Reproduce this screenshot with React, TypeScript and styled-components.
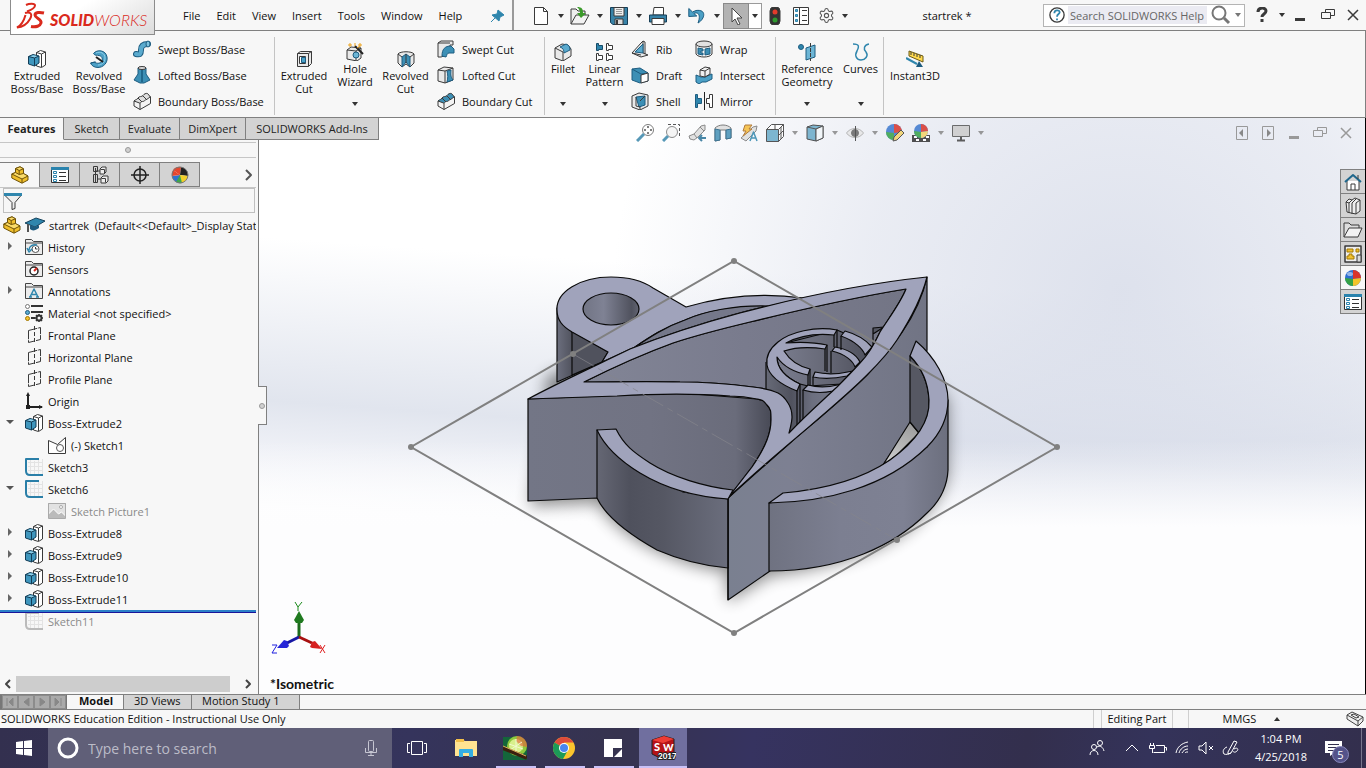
import React from "react";
import styled, { createGlobalStyle, css } from "styled-components";
import { Settings } from "lucide-react";

const UI = '"Open Sans", "Noto Sans", sans-serif';
const INK = "#3a3a3a";
const BLUE = "#2f86ad";
const EDGE = "#808080";

const Global = createGlobalStyle`
  *, *::before, *::after { box-sizing: border-box; }
  body { margin: 0; font-family: ${UI}; font-size: 11px; color: #111; background: #f7f7f7; }
  button, input { font: inherit; color: inherit; }
  button { border: 0; padding: 0; background: none; }
  svg { display: block; flex: none; }
`;

/* ---------- page frame ---------- */
const Page = styled.div`
  display: flex;
  flex-direction: column;
  min-height: 100vh;
  overflow: hidden;
`;
const Center = css`
  display: flex;
  align-items: center;
  justify-content: center;
`;

/* ---------- title bar ---------- */
const TitleBar = styled.header`
  display: flex;
  align-items: stretch;
  height: 31px;
  border-bottom: 1px solid ${EDGE};
  position: relative;
  z-index: 3;
`;
const Brand = styled.div`
  flex: none;
  display: flex;
  align-items: center;
  gap: 4px;
  width: 145px;
  height: 35px;
  margin-left: 10px;
  padding-left: 5px;
  border: 1px solid #8c8c8c;
  border-top: 0;
  background: linear-gradient(150deg, #fff 40%, #dcdcdc);
  color: #da291c;
`;
const BrandName = styled.span`
  padding-top: 6px;
  font: italic 300 16px/20px Lato, ${UI};
  b { font-weight: 900; }
`;
const MenuBar = styled.nav`
  display: flex;
  align-items: center;
  gap: 16px;
  flex: none;
  width: 359px;
  padding: 2px 0 0 28px;
  border-right: 2px solid #9a9a9a;
`;
const MenuItem = styled.button`
  line-height: 16px;
`;
const PinButton = styled.button`
  margin-left: 13px;
`;
const QuickTools = styled.div`
  display: flex;
  align-items: center;
  padding: 1px 0 0 14px;
`;
const QuickButton = styled.button<{ $w?: number; $on?: boolean }>`
  ${Center}
  width: ${(p) => p.$w ?? 26}px;
  height: 26px;
  ${(p) => p.$on && css`background: #b3b3b3; border: 1px solid #8a8a8a;`}
`;
const DropButton = styled.button<{ $w?: number; $boxed?: boolean }>`
  ${Center}
  width: ${(p) => p.$w ?? 13}px;
  height: 26px;
  ${(p) => p.$boxed && css`border: 1px solid #9a9a9a; border-left: 0; background: #fff;`}
`;
const DocName = styled.h1`
  flex: 1;
  margin: 0;
  padding-top: 1px;
  align-self: center;
  font-size: 11px;
  font-weight: 400;
  text-align: center;
`;
const HelpSearch = styled.label`
  display: flex;
  align-items: center;
  align-self: center;
  flex: none;
  width: 202px;
  height: 23px;
  padding-left: 5px;
  border: 1px solid #b4b4b4;
  background: #fff;
`;
const HelpInput = styled.input`
  width: 139px;
  height: 18px;
  margin: 0 4px 0 3px;
  padding: 0 2px;
  border: 0;
  background: #ebebf2;
  &::placeholder { color: #666; opacity: 1; }
`;
const WindowButtons = styled.div`
  display: flex;
  align-items: center;
  flex: none;
`;

/* ---------- ribbon ---------- */
const Ribbon = styled.div`
  display: flex;
  height: 87px;
  padding-left: 6px;
  border-bottom: 1px solid ${EDGE};
  border-right: 1px solid ${EDGE};
`;
const RibbonGroup = styled.section<{ $last?: boolean }>`
  display: flex;
  flex: none;
  margin: 6px 0 2px;
  border-right: ${(p) => (p.$last ? "0" : "1px solid #c4c4c4")};
`;
const BigButton = styled.button<{ $w: number; $drop?: boolean }>`
  display: flex;
  flex-direction: column;
  align-items: center;
  gap: 1px;
  width: ${(p) => p.$w}px;
  padding-top: ${(p) => (p.$drop ? 6 : 13)}px;
  line-height: 13px;
  position: relative;
`;
const BigCaret = styled.span`
  position: absolute;
  bottom: 9px;
`;
const SmallList = styled.div<{ $w: number }>`
  display: flex;
  flex-direction: column;
  width: ${(p) => p.$w}px;
  margin-top: -1px;
  padding-left: 3px;
`;
const SmallButton = styled.button`
  display: flex;
  align-items: center;
  gap: 7px;
  height: 26px;
  white-space: nowrap;
`;

/* ---------- workspace ---------- */
const Workspace = styled.main`
  display: flex;
  flex: 1;
  min-height: 0;
  border-right: 1px solid #000;
`;
const Side = styled.aside`
  display: flex;
  flex-direction: column;
  flex: none;
  width: 259px;
  position: relative;
  z-index: 2;
`;
const CommandTabs = styled.div`
  display: flex;
  width: max-content;
  height: 22px;
`;
const CommandTab = styled.button<{ $on?: boolean; $w: number }>`
  width: ${(p) => p.$w}px;
  line-height: 16px;
  color: #222;
  background: ${(p) => (p.$on ? "#f7f7f7" : "#d3d3d3")};
  font-weight: ${(p) => (p.$on ? 700 : 400)};
  border-right: 1px solid ${EDGE};
  border-bottom: 1px solid ${(p) => (p.$on ? "#f7f7f7" : EDGE)};
`;
const Panel = styled.div`
  display: flex;
  flex-direction: column;
  flex: 1;
  background: #f7f7f7;
  border-right: 1px solid ${EDGE};
  position: relative;
`;
const Grip = styled.div`
  ${Center}
  height: 16px;
  margin: 2px 2px 4px 0;
  border: solid #c6c6c6;
  border-width: 1px 0;
`;
const Dot = styled.span`
  width: 6px;
  height: 6px;
  border: 1px solid #999;
  border-radius: 50%;
  background: #d0d0d0;
`;
const SplitHandle = styled.button`
  ${Center}
  position: absolute;
  left: 258px;
  top: 246px;
  width: 9px;
  height: 39px;
  border: 1px solid ${EDGE};
  border-left: 0;
  background: #f7f7f7;
`;
const ManagerTabs = styled.div`
  display: flex;
  height: 26px;
  margin-right: 2px;
  border-bottom: 1px solid #c6c6c6;
`;
const ManagerTab = styled.button<{ $on?: boolean }>`
  ${Center}
  width: 40px;
  border: solid ${EDGE};
  border-width: 1px 1px ${(p) => (p.$on ? 0 : 1)}px 0;
  background: ${(p) => (p.$on ? "#f7f7f7" : "#d3d3d3")};
`;
const MoreButton = styled.button`
  ${Center}
  width: 16px;
  margin-left: auto;
`;
const FilterBox = styled.label`
  display: flex;
  align-items: center;
  height: 25px;
  margin: 0 3px 1px;
  border: 1px solid #c0c0c0;
`;
const FilterInput = styled.input`
  flex: 1;
  min-width: 0;
  border: 0;
  background: none;
`;
const Tree = styled.ul`
  flex: 1;
  margin: 0;
  padding: 0;
  list-style: none;
`;
const TreeRow = styled.li<{ $sub?: boolean; $root?: boolean; $dim?: boolean }>`
  display: flex;
  align-items: center;
  gap: ${(p) => (p.$root ? 4 : 5)}px;
  height: 22px;
  margin-right: 2px;
  padding-left: ${(p) => (p.$sub ? 48 : 3)}px;
  white-space: nowrap;
  overflow: hidden;
  color: ${(p) => (p.$dim ? "#8a8a8a" : "#111")};
`;
const Toggle = styled.button`
  display: flex;
  align-items: center;
  padding: 0 0 2px 3px;
  width: 17px;
  height: 16px;
`;
const Indent = styled.span`
  width: 17px;
`;
const Rollback = styled.hr`
  height: 3px;
  margin: 0 2px -3px 0;
  border: 0;
  border-bottom: 1px solid #1a149a;
  background: #2c80c8;
  position: relative;
`;
const ScrollBar = styled.div`
  display: flex;
  height: 16px;
  margin: 0 2px 2px 0;
`;
const ScrollArrow = styled.button`
  ${Center}
  width: 16px;
`;
const ScrollThumb = styled.div`
  flex: 1;
  background: #cdcdcd;
  margin-right: 10px;
`;

/* ---------- viewport ---------- */
const Viewport = styled.section`
  flex: 1;
  min-width: 0;
  position: relative;
  background:
    linear-gradient(180deg, rgba(255, 255, 255, 0) 56%, #fdfdfe 71%),
    radial-gradient(ellipse 46% 80% at 78% 30%, rgba(213, 218, 232, 0.8), rgba(213, 218, 232, 0.5) 50%, rgba(213, 218, 232, 0) 100%),
    linear-gradient(184deg, #fff 30%, #e1e5ee 55%, #eef0f6 62%, #fff 72%);
`;
const Scene = styled.svg`
  position: absolute;
  inset: 0;
  width: 100%;
  height: 100%;
`;
const ViewBar = styled.div`
  display: grid;
  grid-template-columns: 1fr auto 1fr;
  align-items: center;
  height: 30px;
  position: relative;
`;
const ViewTools = styled.div`
  grid-column: 2;
  display: flex;
  padding-right: 4px;
  opacity: 0.85;
`;
const ViewTool = styled.button<{ $w?: number }>`
  ${Center}
  width: ${(p) => p.$w ?? 26}px;
  height: 22px;
`;
const DocButtons = styled.div`
  display: flex;
  justify-content: flex-end;
  padding-right: 6px;
`;
const TaskPane = styled.nav`
  position: absolute;
  right: 0;
  top: 51px;
  display: flex;
  flex-direction: column;
  border: solid ${EDGE};
  border-width: 1px 0 0 1px;
`;
const TaskButton = styled.button<{ $on?: boolean }>`
  ${Center}
  width: 24px;
  height: 24px;
  background: ${(p) => (p.$on ? "#f7f7f7" : "#d3d3d3")};
  border-bottom: 1px solid ${EDGE};
`;
const ViewName = styled.div`
  position: absolute;
  left: 11px;
  bottom: 2px;
  font: 700 14px/16px Lato, ${UI};
`;

/* ---------- bottom bars ---------- */
const DocTabs = styled.div`
  display: flex;
  height: 16px;
  border: solid ${EDGE};
  border-width: 1px 0;
`;
const StepButton = styled.button`
  ${Center}
  width: 16px;
  background: #aaa;
  border: 1px solid #8c8c8c;
`;
const Steps = styled.div`
  display: flex;
  width: 67px;
  padding: 0 1px 0 2px;
  background: #777;
`;
const DocTab = styled.button<{ $on?: boolean; $w: number }>`
  display: flex;
  align-items: center;
  width: ${(p) => p.$w}px;
  padding: 0 0 2px ${(p) => (p.$on ? 12 : 10)}px;
  line-height: 12px;
  background: ${(p) => (p.$on ? "#f7f7f7" : "#d3d3d3")};
  font-weight: ${(p) => (p.$on ? 700 : 400)};
  border-right: 1px solid ${EDGE};
`;
const StatusBar = styled.footer`
  display: flex;
  align-items: stretch;
  height: 18px;
  line-height: 18px;
  padding-left: 1px;
`;
const StatusText = styled.span`
  flex: 1;
`;
const StatusCell = styled.span<{ $w: number }>`
  ${Center}
  gap: 18px;
  width: ${(p) => p.$w}px;
  border-left: 1px solid #cfcfcf;
`;
const StatusIcon = styled.span`
  display: flex;
  align-items: center;
  justify-content: flex-end;
  width: 52px;
  padding-right: 2px;
`;

/* ---------- taskbar ---------- */
const Taskbar = styled.footer`
  display: flex;
  height: 40px;
  background: linear-gradient(100deg, #33304f 0, #35345c 30%, #36334f 45%, #363360 55%, #332f4d 75%, #34335a 84%, #332f4d 100%);
  color: #fff;
`;
const StartButton = styled.button`
  ${Center}
  width: 48px;
`;
const TaskSearch = styled.label`
  display: flex;
  align-items: center;
  width: 344px;
  padding: 0 14px 0 8px;
  background: #605f78;
`;
const TaskInput = styled.input`
  flex: 1;
  min-width: 0;
  margin-left: 8px;
  padding: 0;
  border: 0;
  background: none;
  font-size: 14px;
  &::placeholder { color: #bcbcc8; opacity: 1; }
`;
const AppButton = styled.button<{ $run?: boolean; $on?: boolean }>`
  ${Center}
  width: ${(p) => (p.$on ? 48 : 49)}px;
  margin-left: ${(p) => (p.$on ? 2 : 0)}px;
  position: relative;
  background: ${(p) => (p.$on ? "#706f9f" : "none")};
  &::after {
    content: "";
    display: ${(p) => (p.$run || p.$on ? "block" : "none")};
    position: absolute;
    left: ${(p) => (p.$on ? 0 : 6)}px;
    right: ${(p) => (p.$on ? 0 : 3)}px;
    bottom: 0;
    height: 2px;
    background: #c9c1f7;
  }
`;
const Tray = styled.div`
  display: flex;
  margin-left: auto;
`;
const TrayButton = styled.button<{ $w: number }>`
  ${Center}
  width: ${(p) => p.$w}px;
  position: relative;
`;
const Clock = styled.time`
  ${Center}
  flex-direction: column;
  width: 70px;
  line-height: 18px;
`;
const NoticeButton = styled.button`
  display: flex;
  align-items: center;
  width: 45px;
  padding-left: 9px;
  position: relative;
`;
const Badge = styled.span`
  ${Center}
  position: absolute;
  left: 16px;
  top: 18px;
  width: 17px;
  height: 17px;
  border: 1px solid #8a89bd;
  border-radius: 50%;
  background: #54538a;
  font-size: 11px;
`;
const ShowDesktop = styled.button`
  width: 5px;
  border-left: 1px solid #77768c;
`;

/* ---------- icon drawings ---------- */
const Art = ({ s = 18, v, children }: { s?: number; v?: string; children: React.ReactNode }) => (
  <svg width={s} height={s} viewBox={v ?? "0 0 18 18"} fill="none" stroke={INK} strokeLinejoin="round" aria-hidden="true">
    {children}
  </svg>
);
const Caret = ({ c = "#333" }: { c?: string }) => (
  <svg width="6" height="4" viewBox="0 0 6 4" aria-hidden="true"><path d="M0 0h6L3 4z" fill={c} /></svg>
);
const Gray = "#e9e9e9";
const Cube = ({ x, y, w, h, d, f, t, r }: { x: number; y: number; w: number; h: number; d: number; f: string; t: string; r: string }) => (
  <>
    <path d={`M${x} ${y}h${w}v${h}h${-w}z`} fill={f} />
    <path d={`M${x} ${y}l${d} ${-d}h${w}l${-d} ${d}z`} fill={t} />
    <path d={`M${x + w} ${y}l${d} ${-d}v${h}l${-d} ${d}z`} fill={r} />
  </>
);
const Extrude = () => (
  <Art>
    <path d="M8.500 2.500l4-2 5 1.500v13l-4 2.500-5-1.500z" fill="#fff" />
    <path d="M13.500 4l4-2M13.500 4v13M8.500 2.500l5 1.500" />
    <path d="M.5 6.500l4.500-2 6 1.500v7l-4.500 3-6-2z" fill="#3f96bd" stroke="#123d57" />
    <path d="M1.500 6.500l4-1.300 4.500 1-3.500 1.600z" fill="#8fd0ea" stroke="none" />
    <path d="M.5 6.500l6 1.500 4.500-2M6.500 8v8" stroke="#123d57" />
  </Art>
);
const Revolve = () => (
  <Art>
    <path d="M3.500 3.500C7-1 16 0 17 7c1 6-4 10.500-9 10.500-4 0-6.500-2-7.500-4.500l4-1c2 2 6 1.500 7.500-1 1-3-.5-5-3-5.500-2-.5-4 .5-5.500-2z" fill="#4ba0c6" stroke="#1d5c80" />
    <path d="M6 3c4-2 9 0 9 5s-4 7-7 7" stroke="#8fd0ea" />
    <path d="M6 7l7 5" strokeWidth="2" stroke="#222" />
    <path d="M1 13l5-1" stroke="#1d5c80" />
  </Art>
);
const Sweep = () => (
  <Art>
    <path d="M3 14c4 1 5 0 5-4 0-4 2-6 7-6" strokeWidth="6" stroke="#1d5c80" strokeLinecap="round" />
    <path d="M3 14c4 1 5 0 5-4 0-4 2-6 7-6" strokeWidth="4" stroke="#5aaace" strokeLinecap="round" />
    <ellipse cx="15" cy="4" rx="2" ry="3" fill="#7cc3e0" stroke="#1d5c80" />
  </Art>
);
const Loft = () => (
  <Art>
    <path d="M5 2v6l-4 6 6 3h4l6-3-4-6V2z" fill="#3c8fb5" stroke="#1d5c80" />
    <path d="M9 4v12" stroke="#1f678c" strokeWidth="2" />
    <ellipse cx="9" cy="2" rx="4" ry="1.500" fill="#ddd" />
  </Art>
);
const Boundary = ({ top = "#dedede" }: { top?: string }) => (
  <Art>
    <path d="M1 9v5l6 3.500 10.500-6V5z" fill="#f4f4f4" />
    <path d="M1 9c2-2 3-1 4-3s4-1 5-2.500S13 1 14.500 1.500l3 3.500c-2 0-2 2-4 2.500s-2 2-4 2-2 2-3 1.500z" fill={top} />
    <path d="M7 11v6.500M5 6l4 4M10 4l4 4" />
  </Art>
);
const CutBox = () => (
  <Art>
    <path d="M2.500 3.500l3-2h11v12l-3 3h-11z" fill={Gray} />
    <path d="M2.500 3.500h11v13M13.500 3.500l3-2" />
    <path d="M4.500 6.500h6v7h-6z" fill="#fff" /><path d="M6.500 7.500h4v5h-4z" fill="#4ba0c6" stroke="#1d5c80" />
  </Art>
);
const Hole = () => (
  <Art>
    <path d="M1 7l4-3 10 1v10l-4 3-10-2z" fill={Gray} />
    <path d="M1 7l9 1v10M10 8l5-3" />
    <circle cx="10" cy="12" r="3" fill="#6db6d6" stroke="#1d5c80" />
    <path d="M9 3l8 8" stroke="#222" strokeWidth="2" />
    <path d="M4 0v4M2 2h4M9 0v3M14 0v4M12 2h4M11 5l3-2" stroke="#eda31c" />
  </Art>
);
const RevCut = () => (
  <Art>
    <path d="M1 4c2-3 14-3 16 0v9l-4 4-4-3-4 3-4-4z" fill={Gray} />
    <path d="M9 4l-4 3v10l4-5 4 5V7z" fill="#3c8fb5" stroke="#1d5c80" /><path d="M9 4v9M1 4l4 3M17 4l-4 3" />
  </Art>
);
const SweptCut = () => (
  <Art>
    <path d="M1 3l3-2h12v4h-3v2c-5 0-6 4-6 9l-3 1H1z" fill={Gray} />
    <path d="M5 16c0-7 3-10 9-10l3 3v4h-5c-2 0-2 2-3 4z" fill="#3c8fb5" stroke="#1d5c80" /><path d="M1 3h12" />
  </Art>
);
const LoftCut = () => (
  <Art>
    <path d="M1 4l6-3 9 1v12l-8 3-7-2z" fill={Gray} />
    <path d="M1 4l7 1v12M8 5l8-3" /><path d="M10 5l4-1c0 4-1 6 2 10l-6 2c1-4 1-7 0-11z" fill="#3c8fb5" stroke="#1d5c80" />
  </Art>
);
const Fillet = () => (
  <Art>
    <path d="M1 5l7-4 6 1 3 4v7l-8 5-8-3z" fill={Gray} />
    <path d="M6 4l6-3c3 1 4 3 4 6l-6 3c0-3-1-5-4-6z" fill="#5aaace" stroke="#1d5c80" /><path d="M1 5l8 4v9" />
  </Art>
);
const Linear = () => (
  <Art>
    {[[0.5, 0.5], [10.5, 0.5], [0.5, 10.5], [10.5, 10.5]].map(([x, y], i) => (
      <path key={i} d={`M${x} ${y}h2v2h4v4h-4v1h-2z`} fill={i ? "#fff" : BLUE} stroke={i ? INK : "#164b68"} />
    ))}
  </Art>
);
const Rib = () => (
  <Art>
    <path d="M1 13l9-10 2-2v12l5 2-7 2z" fill={Gray} /><path d="M4 12l8-8v9z" fill="#5aaace" stroke="#1d5c80" /><path d="M12 1l2 1v12M1 13l9 2" />
  </Art>
);
const Draft = () => (
  <Art>
    <path d="M1 3l8-1 8 5v8l-8 2-8-3z" fill="#3c8fb5" stroke="#1d5c80" /><path d="M1 3l9 5 7-1" stroke="#1d5c80" /><path d="M10 9l7-2v8l-7 2z" fill="#fff" />
  </Art>
);
const Shell = () => (
  <Art>
    <path d="M1 4l7-3 9 2v11l-8 4-8-3z" fill={Gray} /><path d="M5 5l9-1v9l-6 2z" fill="#3c8fb5" stroke="#1d5c80" /><path d="M5 5v9l4 1v3M9 9l5-5" />
  </Art>
);
const Wrap = () => (
  <Art>
    <path d="M1 4v10c2 4 14 4 16 0V4" fill="#f4f4f4" /><ellipse cx="9" cy="4" rx="8" ry="3" fill="#e2e2e2" />
    <path d="M3 8l5 1v2H6v2h2v2l-5-1zM10 9l5-1v6l-5 1z" fill="#3c8fb5" stroke="#1d5c80" />
  </Art>
);
const Intersect = () => (
  <Art>
    <path d="M1 9l5 2h4l7-3v5l-6 3H7l-3 2-3-2z" fill="#4ba0c6" stroke="#1d5c80" />
    <path d="M5 4l5-3 5 1v6l-5 3-5-1z" fill="#f0f0f0" /><path d="M5 4l5 1v6M10 5l5-3" />
  </Art>
);
const Mirror = () => (
  <Art>
    <path d="M.5 2.500h2v4h4v5h-4v4h-2z" fill={BLUE} stroke="#1d5c80" /><path d="M17.500 2.500h-3v4h-3v5h3v4h3z" fill="#fff" /><path d="M9.500 0v18" stroke="#222" />
  </Art>
);
const RefGeo = () => (
  <Art>
    <circle cx="3" cy="4" r="2.500" fill={BLUE} stroke="#1d5c80" /><path d="M8 5l9-3v12l-9 3z" fill="#6db6d6" stroke="#1d5c80" /><path d="M12.500 0v18" strokeDasharray="4 1" />
  </Art>
);
const Curves = () => (
  <Art><path d="M1 1c7 0 6 3 4 7-3 5 0 9 4 9s8-4 5-8c-3-3-2-7 3-8" stroke={BLUE} strokeWidth="1.500" /></Art>
);
const Instant = () => (
  <Art>
    <path d="M3 1l14 5v6L3 6z" fill="#ffd94d" stroke="#6b5a15" /><path d="M5 2v3M8 3v3M11 4v3M14 5v3" />
    <path d="M0 8l11 6" stroke={BLUE} strokeWidth="2" /><path d="M17 17l-7 0 3-6z" fill="#1d5c80" stroke="none" />
  </Art>
);
const Part = () => (
  <Art>
    <path d="M.8 8l3.700-1.500V2.500L9 .8l3.500 2v5L17 10v4l-6 3.200L.8 12z" fill="#f0bf2c" stroke="#6e5208" />
    <path d="M4.500 2.500L9 .8l3.500 2-4.300 1.700zM.8 8l3.700-1.500 3.700 2 4.300-1L17 10l-6 3z" fill="#fbdc6a" stroke="#6e5208" />
    <path d="M8.200 4.500v4M11 13v4" stroke="#6e5208" />
  </Art>
);
const PropList = () => (
  <Art>
    <path d="M.5 1.500h17v15H.5z" fill="#fff" stroke="#333" /><path d="M0 2.500h18" stroke="#2a83ad" strokeWidth="3" />
    {[6, 10, 14].map((y) => <g key={y}><path d={`M2.500 ${y - 0.5}h3v2h-3z`} stroke="#2a83ad" /><path d={`M8 ${y + 0.5}h7`} stroke="#333" /></g>)}
  </Art>
);
const Config = () => (
  <Art>
    <path d="M2.500.5h4v5h-4zM2.500 8.500h4v8h-4z" /><path d="M4.500 2v14M5 5h4M6 13h5" />
    <path d="M9 3l2-2h4v5l-2 2H9zM10 12l2-2h5v5l-2 2h-5z" fill="#eee" /><path d="M10.500 12.500h4v4M9.500 3.500h4v4" />
  </Art>
);
const Target = () => (
  <Art><circle cx="9" cy="9" r="6" strokeWidth="1.500" stroke="#222" /><path d="M9 0v18M0 9h18" strokeWidth="1.500" stroke="#222" /></Art>
);
const Ball = ({ s = 18 }: { s?: number }) => (
  <Art s={s}>
    <circle cx="9" cy="9" r="8" fill="#2f6fd0" stroke="none" />
    <path d="M9 1a8 8 0 0 1 8 8L9 10z" fill="#d9342b" stroke="none" />
    <path d="M17 9a8 8 0 0 1-8 8l0-7z" fill="#f3c42a" stroke="none" />
    <path d="M9 17a8 8 0 0 1-8-8l8 1z" fill="#35a246" stroke="none" />
    <ellipse cx="6" cy="5" rx="3" ry="2" fill="#fff" opacity=".5" stroke="none" />
  </Art>
);
const Ball2 = () => (
  <Art>
    <circle cx="9" cy="9" r="8" fill="#fff" stroke="none" />
    <path d="M9 9L2 4a8 8 0 0 1 8-3z" fill="#e6462e" stroke="none" /><path d="M9 9l1-8a8 8 0 0 1 7 9z" fill="#222" stroke="none" />
    <path d="M9 9l8 1a8 8 0 0 1-8 7z" fill="#f2cf2b" stroke="none" /><path d="M9 9v8a8 8 0 0 1-8-7z" fill="#3173cf" stroke="none" />
    <path d="M9 9l-8 1a8 8 0 0 1 1-6z" fill="#e6462e" stroke="none" /><path d="M9 9l2 8a8 8 0 0 1-6-1z" fill="#3fa54c" stroke="none" />
    <circle cx="9" cy="9" r="8" stroke="#777" />
  </Art>
);
const Funnel = () => (
  <Art><path d="M1 3.500h16l-6 7v6l-3 1v-7z" fill="#eee" /><path d="M0 2.500h18" stroke={BLUE} strokeWidth="3" /></Art>
);
const Cap = () => (
  <svg width="20" height="18" viewBox="0 0 20 18" aria-hidden="true">
    <path d="M0 7l11-5 9 3-10 6z" fill={BLUE} stroke="#17435c" /><path d="M5 9v4c2 2 5 2 9-1V9l-4 2z" fill="#1d5c80" /><path d="M2 8v8h2V8z" fill="#555" />
  </svg>
);
const Folder = ({ children }: { children?: React.ReactNode }) => (
  <Art><path d="M.5 1.500h6l2 2h9v13H.5z" fill="#ececec" stroke="#444" /><path d="M0 5h18" stroke="#444" />{children}</Art>
);
const Plane = () => (
  <Art><path d="M3.500 4.500l12-3v12l-12 3z" strokeDasharray="9 1" /><path d="M9.500 0v18" strokeDasharray="4 2" /></Art>
);
const SketchIcon = ({ dim }: { dim?: boolean }) => (
  <Art>
    <path d="M5.500 1v15M9.500 3v13M13.500 1v15M17.500 1v15M3 4.500h15M3 8.500h15M3 12.500h15" stroke="#e3e3e3" />
    <path d="M14 1H1v12q0 4 4 4h13" stroke={dim ? "#bbb" : "#2a7fa8"} strokeWidth="2" />
  </Art>
);
const treeIcons: Record<string, React.ReactNode> = {
  history: <Folder><circle cx="10.500" cy="11" r="3.500" stroke="#555" fill="#fff" /><path d="M10.500 9v2h2" /><path d="M4 12c0-4 4-6 8-5M2 10l2 4 3-3" stroke={BLUE} strokeWidth="1.500" /></Folder>,
  sensors: <Folder><circle cx="9" cy="11" r="4" fill="#fff" stroke="#222" strokeWidth="1.500" /><path d="M9 11l3-3" stroke="#d5281f" strokeWidth="2" /></Folder>,
  notes: <Folder><path d="M5 15L9 7l4 8M6.500 12.500h5M4 15h3M11 15h3" stroke={BLUE} strokeWidth="1.500" /></Folder>,
  material: (
    <Art>
      <path d="M6 2h12M6 8h12M6 14h4" stroke="#333" strokeWidth="2" />
      <circle cx="2.500" cy="2.500" r="2" fill="#fff" stroke="#777" /><circle cx="2.500" cy="8.500" r="2" fill="#5aaace" stroke="#1d5c80" /><circle cx="2.500" cy="14.500" r="2" fill="#f2c230" stroke="#a37800" />
      <circle cx="14" cy="14" r="2.500" stroke="#333" strokeWidth="2" /><path d="M14 10v2M14 16v2M10 14h2M16 14h2M11 11l1 1M17 17l-1-1M17 11l-1 1M11 17l1-1" stroke="#333" strokeWidth="1.500" />
    </Art>
  ),
  plane: <Plane />,
  origin: <Art><path d="M3 2v13h14" stroke="#222" strokeWidth="2" /><path d="M3 0l2 4H1zM18 15l-4-2v4zM1 13h4v4H1z" fill="#222" stroke="none" /></Art>,
  boss: <Extrude />,
  sketchEdit: <Art><path d="M.5 4.500v13h17V1.500l-8 7z" fill="#fff" /><circle cx="12" cy="12" r="3.500" fill="#fff" stroke="#555" /></Art>,
  sketch: <SketchIcon />,
  sketchDim: <SketchIcon dim />,
  picture: <Art><path d="M.5 1.500h17v15H.5z" fill="#e2e2e2" stroke="#aaa" /><path d="M.5 12l5-5 5 5 3-2 4 4v2.500H.5z" fill="#bbb" stroke="#fff" /><path d="M.5 1.500h17v15H.5z" stroke="#aaa" /><circle cx="13" cy="5" r="1.500" fill="#fff" stroke="#aaa" /></Art>,
};

/* ---------- data ---------- */
type Row = { label: string; icon: string; sub?: boolean; dim?: boolean; open?: boolean; has?: boolean };
const rows: Row[] = [
  { label: "History", icon: "history", has: true },
  { label: "Sensors", icon: "sensors" },
  { label: "Annotations", icon: "notes", has: true },
  { label: "Material <not specified>", icon: "material" },
  { label: "Frontal Plane", icon: "plane" },
  { label: "Horizontal Plane", icon: "plane" },
  { label: "Profile Plane", icon: "plane" },
  { label: "Origin", icon: "origin" },
  { label: "Boss-Extrude2", icon: "boss", has: true, open: true },
  { label: "(-) Sketch1", icon: "sketchEdit", sub: true },
  { label: "Sketch3", icon: "sketch" },
  { label: "Sketch6", icon: "sketch", has: true, open: true },
  { label: "Sketch Picture1", icon: "picture", sub: true, dim: true },
  { label: "Boss-Extrude8", icon: "boss", has: true },
  { label: "Boss-Extrude9", icon: "boss", has: true },
  { label: "Boss-Extrude10", icon: "boss", has: true },
  { label: "Boss-Extrude11", icon: "boss", has: true },
];

const Big = ({ w, icon, a, b, drop }: { w: number; icon: React.ReactNode; a: string; b?: string; drop?: boolean }) => (
  <BigButton $w={w} $drop={drop}>
    {icon}
    <span>{a}{b && <><br />{b}</>}</span>
    {drop && <BigCaret><Caret /></BigCaret>}
  </BigButton>
);
const Smalls = ({ w, items }: { w: number; items: [React.ReactNode, string][] }) => (
  <SmallList $w={w}>
    {items.map(([icon, name]) => <SmallButton key={name}>{icon}{name}</SmallButton>)}
  </SmallList>
);

const deltaOuter =
  "M528 399C560 382 595 366 630 349C668 334 703 323 740 313C800 297 860 284 927 277C922 297 910 320 897 340C888 354 878 364 867 375C845 397 818 419 790 443C770 460 748 479 728 498C738 485 745 476 752 467C760 455 764 448 767 440C770 432 771 426 771 420C771 411 771 409 767 405C763 400 762 400 757 399C748 397 740 396 730 396C690 393 650 394 617 396C587 397 557 398 528 399Z";
const deltaInner =
  "M584 382C610 369 640 355 673 343C697 335 725 328 750 322C795 311 850 298 906 289C901 302 889 318 880 332C874 345 868 355 860 363C850 374 844 380 837 387C822 401 806 415 789 433C791 425 792 422 792 417C792 411 790 406 788 403C785 398 782 395 778 393C770 389 762 388 753 387C730 384 704 382 680 382C650 381 610 382 584 382Z";
const TOP = "#a0a3bb";

const Model = () => (
  <Scene viewBox="259 118 1106 576" preserveAspectRatio="xMidYMid meet" role="img" aria-label="startrek part, isometric view">
    <defs>
      <filter id="soft" x="-20%" y="-20%" width="140%" height="140%"><feGaussianBlur stdDeviation="8" /></filter>
      <linearGradient id="frontWall" gradientUnits="userSpaceOnUse" x1="528" y1="0" x2="772" y2="0">
        <stop offset="0" stopColor="#737686" /><stop offset=".5" stopColor="#717383" /><stop offset=".85" stopColor="#6a6c7b" /><stop offset="1" stopColor="#474955" />
      </linearGradient>
      <linearGradient id="crescent" gradientUnits="userSpaceOnUse" x1="597" y1="0" x2="728" y2="0">
        <stop offset="0" stopColor="#656774" /><stop offset=".25" stopColor="#4f515d" /><stop offset=".5" stopColor="#555763" /><stop offset="1" stopColor="#6b6e7d" />
      </linearGradient>
      <linearGradient id="ringWall" gradientUnits="userSpaceOnUse" x1="769" y1="0" x2="948" y2="0">
        <stop offset="0" stopColor="#6f7281" /><stop offset=".4" stopColor="#7c7f91" /><stop offset=".75" stopColor="#7e8193" /><stop offset="1" stopColor="#6c6f7e" />
      </linearGradient>
      <linearGradient id="face" gradientUnits="userSpaceOnUse" x1="728" y1="0" x2="927" y2="0">
        <stop offset="0" stopColor="#7a8090" /><stop offset=".3" stopColor="#7d8092" /><stop offset="1" stopColor="#717484" />
      </linearGradient>
      <linearGradient id="backWall" gradientUnits="userSpaceOnUse" x1="584" y1="0" x2="906" y2="0">
        <stop offset="0" stopColor="#828596" /><stop offset=".5" stopColor="#797b8d" /><stop offset="1" stopColor="#737585" />
      </linearGradient>
      <linearGradient id="bore" gradientUnits="userSpaceOnUse" x1="584" y1="0" x2="640" y2="0">
        <stop offset="0" stopColor="#727585" /><stop offset=".35" stopColor="#7f8294" /><stop offset=".85" stopColor="#50525e" /><stop offset="1" stopColor="#666876" />
      </linearGradient>
      <linearGradient id="eyelet" gradientUnits="userSpaceOnUse" x1="557" y1="0" x2="573" y2="0">
        <stop offset="0" stopColor="#6c6f7e" /><stop offset="1" stopColor="#4f515c" />
      </linearGradient>
      <linearGradient id="boss" gradientUnits="userSpaceOnUse" x1="766" y1="0" x2="850" y2="0">
        <stop offset="0" stopColor="#676a77" /><stop offset=".3" stopColor="#50525e" /><stop offset=".55" stopColor="#6c6f7f" /><stop offset="1" stopColor="#7c7f90" />
      </linearGradient>
      <linearGradient id="cell" gradientUnits="userSpaceOnUse" x1="784" y1="0" x2="870" y2="0">
        <stop offset="0" stopColor="#777a8b" /><stop offset=".5" stopColor="#666876" /><stop offset="1" stopColor="#4e505c" />
      </linearGradient>
      <linearGradient id="ground" gradientUnits="userSpaceOnUse" x1="910" y1="422" x2="890" y2="465">
        <stop offset="0" stopColor="#9b9b9b" /><stop offset="1" stopColor="#cfcfcf" />
      </linearGradient>
      <clipPath id="pocket"><path d={deltaInner} /></clipPath>
    </defs>
    <path d="M546 400V376L600 360L900 350L948 400V475C935 520 890 560 770 576L728 602L726 572C680 566 620 540 597 503L530 506Z" fill="#000" opacity=".45" filter="url(#soft)" />

    <g stroke="#0a0a0a" strokeWidth="1.200" strokeLinejoin="round">
      <path d="M557 308V382L573 375L602 362L608 352L572 332Z" fill="url(#eyelet)" />
      <path d="M572 331V375L602 362L608 352Z" fill="#50525d" />
      <path d="M557 310C556 292 580 277 611 277C630 277 643 281 653 288L686 307C720 297 760 292 803 298L765 307C735 306 705 311 685 320C665 327 650 337 635 347L602 362L608 352L572 332C562 326 557 320 557 310Z" fill={TOP} />
      <path d="M635 347C650 337 665 327 685 320C705 311 735 305 768 306C720 317 680 330 635 347Z" fill="#75788a" />
      <ellipse cx="611" cy="309" rx="28" ry="16" fill="url(#bore)" />

      <path d="M528 399V501L597 498L728 560V498C738 485 745 476 752 467C760 455 764 448 767 440C770 432 771 426 771 420C771 411 771 409 767 405C763 400 762 400 757 399L680 393Z" fill="url(#frontWall)" />
      <path d={deltaInner} fill="url(#backWall)" />
      <g clipPath="url(#pocket)">
        <path d="M766 360V395L790 440L840 400L880 350L860 335L820 328L778 342Z" fill="url(#boss)" stroke="none" />
        <path d="M766 362V395" />
        <path d="M777 357C780 350 784 347 786 343L837 330L860 340L872 347L865 362L842 384L808 386L800 384C787 378 777 370 777 357Z" fill="url(#cell)" />
        <path d="M837 330C815 326 790 332 778 342C768 350 766 358 767 365C769 377 782 385 797 391L800 384C787 378 777 370 777 357C783 366 793 372 808 375L810 369C797 366 789 359 784 351C799 346 812 347 825 349L827 345C813 342 800 342 786 343C799 336 815 333 834 335Z" fill={TOP} />
        <path d="M845 331L841 336C855 341 863 349 865 355L872 347C866 340 856 334 845 331Z" fill={TOP} />
        <path d="M835 347L832 351C845 354 853 361 855 367L860 362C856 354 847 349 835 347Z" fill={TOP} />
        <path d="M815 372L813 377C826 380 838 378 847 376L853 371C840 374 827 375 815 372Z" fill={TOP} />
        <path d="M808 385L803 390C813 393 824 393 833 391L842 384C831 387 819 388 808 385Z" fill={TOP} />
        <path d="M797 391V430M800 384V426M803 390V423M808 375V385M810 369V386M813 377V385M825 349V371M827 345V372M831 351V373M834 335V347M837 330V347M841 336V350" fill="none" />
        <path d="M873 350V328L884 327L873 334" fill="#555763" />
      </g>

      <path d="M927 277V350L910 424L883 465L880 500L770 503V571L728 600V498L790 443C818 419 845 397 867 375C890 350 918 318 927 277Z" fill="url(#face)" />
      <path d={deltaOuter + deltaInner} fillRule="evenodd" fill={TOP} />

      <path d="M597 430V498C605 515 625 532 657 550C680 560 705 566 728 568V499L683 492Z" fill="url(#crescent)" />
      <path d="M597 430C604 445 617 459 640 473C668 490 698 497 728 499L733 490C705 487 672 477 650 463C633 452 624 445 616 429Z" fill={TOP} />
      <path d="M728 499V600" />

      <path d="M910 422L883 465L897 455L919 433Z" fill="url(#ground)" />
      <path d="M910 356V422L919 433C927 422 930 410 929 400C928 380 920 366 910 356Z" fill="#565863" />
      <path d="M948 400V470C947 490 938 503 927 513C895 545 842 571 769 571V503L857 488L927 447Z" fill="url(#ringWall)" />
      <path d="M916 341C935 357 948 380 948 400C948 418 940 434 927 447C885 488 825 502 769 503L783 493C830 489 865 477 890 460C918 440 930 420 929 400C928 380 920 366 910 356Z" fill={TOP} />
    </g>

    <path d="M734 261L1057 447L734 633L411 447Z" fill="none" stroke="#808080" strokeWidth="2" />
    <path d="M573 354L897 540" stroke="#85858c" strokeDasharray="24 5 6 5" opacity=".7" />
    {[[734, 261], [1057, 447], [734, 633], [411, 447], [573, 354], [897, 540]].map(([x, y]) => (
      <circle key={`${x}-${y}`} cx={x} cy={y} r="3" fill="#808080" />
    ))}

    <g strokeWidth="3">
      <path d="M299 637V622" stroke="#1c6b1c" /><path d="M299 611l5 9-2 3h-6l-2-3z" fill="#1f7a1f" />
      <path d="M299 637L287 643" stroke="#1717a5" /><path d="M277 648l7-8 3 1 2 5-2 2z" fill="#2626d8" />
      <path d="M299 637L312 643" stroke="#a81010" /><path d="M322 649l-7-8-3 1-2 5 2 1z" fill="#d62020" />
    </g>
    <g fill="none" strokeWidth="1">
      <path d="M295 602l3 5 4-5M298 607v4" stroke="#1a8a1a" /><path d="M272 645h5l-5 8h5" stroke="#2020e0" /><path d="M320 645l5 8M325 645l-5 8" stroke="#e02020" />
    </g>
  </Scene>
);

const Logo = () => (
  <svg width="30" height="30" viewBox="0 0 30 30" fill="none" stroke="#da291c" aria-hidden="true">
    <path d="M10 3c3-1.500 9-2 9 .5 0 2.500-4 4.500-8 6" strokeWidth="2" />
    <path d="M9 11c5-1.500 8 .5 5 6-2.500 4.500-7 8-13 8.500 4-2 7-7 8.500-12.500" strokeWidth="2" />
    <path d="M28 11c-4-1-9-1-9 2 0 3.500 7 4 6 8-.8 3-5 4.500-10 3.500" strokeWidth="3" />
  </svg>
);

const MinArt = ({ c = INK }: { c?: string }) => <Art s={16} v="0 0 16 16"><path d="M3 12.500h10" stroke={c} strokeWidth="3" /></Art>;
const RestoreArt = ({ c = INK }: { c?: string }) => <Art s={16} v="0 0 16 16"><path d="M5.500 5.500v-3h9v6h-4M1.500 5.500h9v6h-9z" stroke={c} /></Art>;
const CloseArt = ({ c = INK }: { c?: string }) => <Art s={16} v="0 0 16 16"><path d="M3 3l10 10M13 3L3 13" stroke={c} strokeWidth="1.500" /></Art>;

export default function App() {
  return (
    <Page>
      <Global />
      <TitleBar>
        <Brand><Logo /><BrandName aria-label="SOLIDWORKS"><b>SOLID</b>WORKS</BrandName></Brand>
        <MenuBar>
          {["File", "Edit", "View", "Insert", "Tools", "Window", "Help"].map((m) => <MenuItem key={m}>{m}</MenuItem>)}
          <PinButton aria-label="Pin menu">
            <Art s={14} v="0 0 14 14"><path d="M7 1l6 5-2 1-2 1-1 4-7-6 5-1zM4 9l-4 4" fill={BLUE} stroke={BLUE} /></Art>
          </PinButton>
        </MenuBar>
        <QuickTools>
          <QuickButton aria-label="New"><Art><path d="M2.500.5h9l4 4v13h-13z" fill="#fff" /><path d="M11.500.5v4h4" /></Art></QuickButton>
          <DropButton aria-label="New options"><Caret /></DropButton>
          <QuickButton aria-label="Open">
            <Art s={20} v="0 0 20 20"><path d="M1 18V3h5l2 2h7v4" fill="#eee" /><path d="M1 18L6 9h13l-5 9z" fill="#f2f2f2" /><path d="M7 1c5 0 6 2 6 6h3l-5 5-4-5h3c0-3-1-4-3-6z" fill="#3b9a2a" stroke="none" /></Art>
          </QuickButton>
          <DropButton aria-label="Open options"><Caret /></DropButton>
          <QuickButton aria-label="Save"><Art><path d="M.5.5h17v17H3l-2.500-2z" fill="#3883a8" stroke="#163e57" /><path d="M4 .5h10V9H4z" fill="#eee" /><path d="M6 2.500h6M6 4.500h6M6 6.500h6" stroke="#999" /><path d="M5 12h8v5.500H5z" fill="#ddd" /><path d="M7 13v4" strokeWidth="2" /></Art></QuickButton>
          <DropButton aria-label="Save options"><Caret /></DropButton>
          <QuickButton aria-label="Print"><Art><path d="M5 .5h9.500V8H4z" fill="#fff" /><path d="M.5 8h17v7H.5z" fill="#3883a8" stroke="#163e57" /><path d="M3 11.500h12v6H3z" fill="#fff" /></Art></QuickButton>
          <DropButton aria-label="Print options"><Caret /></DropButton>
          <QuickButton aria-label="Undo"><Art><path d="M.8 1.500v8l8-.500-3-2.500c4-2 7.500 1 4.200 9.500 7-4 9-14-2-12.500L4.500 5z" fill="#4ba0c6" stroke="#1d5c80" /></Art></QuickButton>
          <DropButton aria-label="Undo options"><Caret /></DropButton>
          <QuickButton $on aria-label="Select"><Art><path d="M5 1v14l3-3 3 6 2-1-3-6h5z" fill="#fff" stroke="#444" /></Art></QuickButton>
          <DropButton $boxed aria-label="Select options"><Caret /></DropButton>
          <QuickButton aria-label="Rebuild"><Art><rect x="4" y="0" width="10" height="18" rx="4" fill="#333" /><circle cx="9" cy="5" r="2.500" fill="#e33b2b" stroke="none" /><circle cx="9" cy="13" r="2.500" fill="#2e9a2e" stroke="none" /></Art></QuickButton>
          <QuickButton aria-label="File properties">
            <Art><path d="M1.500.5h15v17h-15zM7.500.5v17" fill="#fff" />{[2, 7, 12].map((y) => <g key={y}><path d={`M3.500 ${y + 0.5}h2v2h-2z`} fill="#5aaace" stroke={BLUE} /><path d={`M10 ${y + 1.5}h5`} /></g>)}</Art>
          </QuickButton>
          <QuickButton $w={24} aria-label="Options"><Settings size={17} strokeWidth={1.5} color="#555" /></QuickButton>
          <DropButton aria-label="More options"><Caret /></DropButton>
        </QuickTools>
        <DocName>startrek *</DocName>
        <HelpSearch>
          <Art s={16} v="0 0 18 18"><circle cx="9" cy="9" r="8" fill="#fff" strokeWidth="1.500" /><path d="M6 7c0-4 6-4 6-1 0 2-3 2-3 5M9 13v2" stroke={BLUE} strokeWidth="2" /></Art>
          <HelpInput aria-label="Search SOLIDWORKS Help" placeholder="Search SOLIDWORKS Help" />
          <Art s={20} v="0 0 20 20"><circle cx="8" cy="8" r="6.500" stroke="#777" strokeWidth="2" /><path d="M13 13l5 5" stroke="#777" strokeWidth="3" /></Art>
          <DropButton $w={14} as="span"><Caret c="#777" /></DropButton>
        </HelpSearch>
        <WindowButtons>
          <QuickButton $w={34} aria-label="Help"><Art s={16} v="0 0 16 16"><path d="M4 5c0-5 8-5 8-1 0 3-4 3-4 6M8 12v3" strokeWidth="3" /></Art></QuickButton>
          <DropButton $w={5} aria-label="Help options"><Caret /></DropButton>
          <QuickButton $w={32} aria-label="Minimize"><MinArt /></QuickButton>
          <QuickButton $w={24} aria-label="Restore"><RestoreArt /></QuickButton>
          <QuickButton aria-label="Close"><CloseArt /></QuickButton>
        </WindowButtons>
      </TitleBar>

      <Ribbon>
        <RibbonGroup>
          <Big w={62} icon={<Extrude />} a="Extruded" b="Boss/Base" />
          <Big w={62} icon={<Revolve />} a="Revolved" b="Boss/Base" />
          <Smalls w={144} items={[[<Sweep />, "Swept Boss/Base"], [<Loft />, "Lofted Boss/Base"], [<Boundary />, "Boundary Boss/Base"]]} />
        </RibbonGroup>
        <RibbonGroup>
          <Big w={58} icon={<CutBox />} a="Extruded" b="Cut" />
          <Big w={44} icon={<Hole />} a="Hole" b="Wizard" drop />
          <Big w={57} icon={<RevCut />} a="Revolved" b="Cut" />
          <Smalls w={110} items={[[<SweptCut />, "Swept Cut"], [<LoftCut />, "Lofted Cut"], [<Boundary top="#3c8fb5" />, "Boundary Cut"]]} />
        </RibbonGroup>
        <RibbonGroup>
          <Big w={36} icon={<Fillet />} a="Fillet" drop />
          <Big w={47} icon={<Linear />} a="Linear" b="Pattern" drop />
          <Smalls w={64} items={[[<Rib />, "Rib"], [<Draft />, "Draft"], [<Shell />, "Shell"]]} />
          <Smalls w={83} items={[[<Wrap />, "Wrap"], [<Intersect />, "Intersect"], [<Mirror />, "Mirror"]]} />
        </RibbonGroup>
        <RibbonGroup>
          <Big w={62} icon={<RefGeo />} a="Reference" b="Geometry" drop />
          <Big w={45} icon={<Curves />} a="Curves" drop />
        </RibbonGroup>
        <RibbonGroup $last>
          <Big w={62} icon={<Instant />} a="Instant3D" />
        </RibbonGroup>
      </Ribbon>

      <Workspace>
        <Side>
          <CommandTabs>
            <CommandTab $on $w={64}>Features</CommandTab>
            <CommandTab $w={56}>Sketch</CommandTab>
            <CommandTab $w={60}>Evaluate</CommandTab>
            <CommandTab $w={66}>DimXpert</CommandTab>
            <CommandTab $w={133}>SOLIDWORKS Add-Ins</CommandTab>
          </CommandTabs>
          <Panel>
            <Grip><Dot /></Grip>
            <ManagerTabs>
              <ManagerTab $on aria-label="Feature tree"><Part /></ManagerTab>
              <ManagerTab aria-label="Properties"><PropList /></ManagerTab>
              <ManagerTab aria-label="Configurations"><Config /></ManagerTab>
              <ManagerTab aria-label="Dimensions"><Target /></ManagerTab>
              <ManagerTab aria-label="Display"><Ball2 /></ManagerTab>
              <MoreButton aria-label="More"><Art s={12} v="0 0 12 12"><path d="M4 1l5 5-5 5" stroke="#555" strokeWidth="2" /></Art></MoreButton>
            </ManagerTabs>
            <FilterBox><Funnel /><FilterInput aria-label="Filter tree" /></FilterBox>
            <Tree>
              <TreeRow $root><Part /><Cap /><span>startrek&nbsp; (Default&lt;&lt;Default&gt;_Display State 1&gt;)</span></TreeRow>
              {rows.map((r) => (
                <TreeRow key={r.label} $sub={r.sub} $dim={r.dim}>
                  {!r.sub && (r.has ? (
                    <Toggle aria-label={`Toggle ${r.label}`}>
                      {r.open ? <Art s={8} v="0 0 8 8"><path d="M0 2h8L4 6z" fill="#555" stroke="none" /></Art> : <Art s={8} v="0 0 8 8"><path d="M2 0l4 4-4 4z" fill="#666" stroke="none" /></Art>}
                    </Toggle>
                  ) : <Indent />)}
                  {treeIcons[r.icon]}
                  <span>{r.label}</span>
                </TreeRow>
              ))}
              <Rollback />
              <TreeRow $dim><Indent />{treeIcons.sketchDim}<span>Sketch11</span></TreeRow>
            </Tree>
            <ScrollBar>
              <ScrollArrow aria-label="Scroll left"><Art s={10} v="0 0 10 10"><path d="M7 1L3 5l4 4" stroke="#444" strokeWidth="2" /></Art></ScrollArrow>
              <ScrollThumb />
              <ScrollArrow aria-label="Scroll right"><Art s={10} v="0 0 10 10"><path d="M3 1l4 4-4 4" stroke="#444" strokeWidth="2" /></Art></ScrollArrow>
            </ScrollBar>
            <SplitHandle aria-label="Collapse panel"><Dot /></SplitHandle>
          </Panel>
        </Side>

        <Viewport>
          <Model />
          <ViewBar>
            <ViewTools>
              <ViewTool aria-label="Zoom to fit"><Art><circle cx="12" cy="6" r="5.500" fill="#fff" stroke="#666" /><path d="M12 2v2M12 8v2M8 6h2M14 6h2" strokeWidth="1.500" /><path d="M1 17l7-7" stroke="#3a87ab" strokeWidth="3" /></Art></ViewTool>
              <ViewTool aria-label="Zoom to area"><Art><path d="M6 .5h11.500V14" strokeDasharray="3 2" /><circle cx="10" cy="8" r="5.500" fill="#f4f4f4" stroke="#777" /><path d="M1 17l5-5" stroke="#3a87ab" strokeWidth="3" /></Art></ViewTool>
              <ViewTool aria-label="Previous view"><Art><path d="M1 12l5-2 7-8 4-1v5l-7 7-4 3-4-1z" fill="#ddd" stroke="#777" /><path d="M6 10l3 4M12 3l4 4" stroke="#777" /><path d="M18 14h-7M14 11l-3 3 3 3" stroke="#2a7298" strokeWidth="2" /></Art></ViewTool>
              <ViewTool aria-label="Section view"><Art><path d="M1 4c4-4 12-4 16 0v10l-5 1V6H6v10l-5 1z" fill="#ddd" stroke="#666" /><path d="M1 5l5 1v10l-5 1zM12 6l5-1v9l-5 1z" fill="#4591b6" stroke="#1d5c80" /></Art></ViewTool>
              <ViewTool aria-label="Annotation views"><Art><path d="M1 14L13 3l4-1-1 5L6 17z" fill="#ddd" stroke="#777" /><path d="M5 1h7L9 5h3l-9 7 3-5H3z" fill="#f5bd3b" stroke="#a5671f" /><path d="M10 17l3.500-9 3.500 9M11 14h5" stroke={BLUE} strokeWidth="1.500" /></Art></ViewTool>
              <ViewTool aria-label="View orientation"><Art><Cube x={0.5} y={5.5} w={12} h={12} d={5} f="#69abc9" t="#fff" r="#fff" /><path d="M9 .5v5M15 3v12M12.500 11.500l5-5" /></Art></ViewTool>
              <ViewTool $w={14} aria-label="Orientation options"><Caret c="#888" /></ViewTool>
              <ViewTool aria-label="Display style"><Art><path d="M1 3l6-2 10 1v12l-7 3-9-2z" fill="#69abc9" stroke="#333" /><path d="M1 3l9 2 7-3M10 5v12" /><path d="M10 5l7-3v12l-7 3z" fill="#f2f7fa" /></Art></ViewTool>
              <ViewTool $w={14} aria-label="Style options"><Caret c="#888" /></ViewTool>
              <ViewTool aria-label="Hide or show items"><Art><path d="M.5 9c4-6 13-6 17 0-4 6-13 6-17 0z" fill="#e6e6e6" stroke="#aaa" /><circle cx="9" cy="9" r="3.500" fill="#666" stroke="#666" /><path d="M9.500 2v15" /></Art></ViewTool>
              <ViewTool $w={14} aria-label="Visibility options"><Caret c="#888" /></ViewTool>
              <ViewTool aria-label="Edit appearance"><Art s={20} v="0 0 20 20"><circle cx="9" cy="9" r="8" fill="#3b78cf" stroke="none" /><path d="M9 1a8 8 0 0 1 8 8l-8 1z" fill="#d9342b" stroke="none" /><path d="M9 17a8 8 0 0 1-8-8l8 1z" fill="#35a246" stroke="none" /><path d="M8 18l1-4 7-7 3 3-7 7z" fill="#f3d267" /></Art></ViewTool>
              <ViewTool aria-label="Apply scene"><Art s={20} v="0 0 20 20"><path d="M1 12h18v7H1z" fill="#333" stroke="none" /><path d="M3 14h3M9 14h3M15 14h3M5 17h3M12 17h3" stroke="#fff" strokeWidth="2" /><circle cx="10" cy="8" r="7" fill="#3b78cf" stroke="none" /><path d="M10 1a7 7 0 0 1 7 7l-7 1z" fill="#d9342b" stroke="none" /><path d="M17 8a7 7 0 0 1-7 7V9z" fill="#f3d267" stroke="none" /><path d="M10 15a7 7 0 0 1-7-7l7 1z" fill="#35a246" stroke="none" /></Art></ViewTool>
              <ViewTool $w={14} aria-label="Scene options"><Caret c="#888" /></ViewTool>
              <ViewTool aria-label="View settings"><Art><path d="M.5 1.500h17v11H.5z" fill="#ccc" stroke="#555" /><path d="M9 13v4M5 16.500h8" stroke="#444" strokeWidth="2" /></Art></ViewTool>
              <ViewTool $w={14} aria-label="Setting options"><Caret c="#888" /></ViewTool>
            </ViewTools>
            <DocButtons>
              <ViewTool aria-label="Previous pane"><Art s={14} v="0 0 14 14"><path d="M1.500.5h11v13h-11z" stroke="#999" /><path d="M8 3v8L4 7z" fill="#888" stroke="none" /></Art></ViewTool>
              <ViewTool aria-label="Next pane"><Art s={14} v="0 0 14 14"><path d="M1.500.5h11v13h-11z" stroke="#999" /><path d="M6 3v8l4-4z" fill="#888" stroke="none" /></Art></ViewTool>
              <ViewTool aria-label="Minimize document"><MinArt c="#999" /></ViewTool>
              <ViewTool aria-label="Restore document"><RestoreArt c="#999" /></ViewTool>
              <ViewTool aria-label="Close document"><CloseArt c="#999" /></ViewTool>
            </DocButtons>
          </ViewBar>
          <TaskPane>
            <TaskButton aria-label="Resources"><Art><path d="M3 8v9h12V8" fill="#fff" /><path d="M1 9l8-7 8 7" stroke="#1f678c" strokeWidth="2" /><path d="M7 17v-6h4v6M14 2v4" /></Art></TaskButton>
            <TaskButton aria-label="Design library"><Art><path d="M2 5l3-3 3 1 3-2 5 2v11l-4 3-5-1-4-1z" fill="#eee" /><path d="M2 5l3 1v10M5 6l3-3M8 6v11M8 6l4-4M12 6v11M12 6l4-3" /></Art></TaskButton>
            <TaskButton aria-label="File explorer"><Art s={20} v="0 0 20 20"><path d="M1 17V3h5l2 2h8v3" fill="#ddd" /><path d="M1 17L6 8h13l-4 9z" fill="#f2f2f2" /></Art></TaskButton>
            <TaskButton aria-label="View palette"><Art><path d="M1 1h16v16H1z" fill="#eee" strokeWidth="1.500" /><path d="M3 4h6v3H3zM12 4h3v3h-3zM3 14v-3h2V9h3v2h2v3z" fill="#f2c230" stroke="#a37800" /><path d="M13 10h4v7h-4z" fill="#ddd" /></Art></TaskButton>
            <TaskButton $on aria-label="Appearances"><Ball /></TaskButton>
            <TaskButton aria-label="Custom properties"><PropList /></TaskButton>
          </TaskPane>
          <ViewName>*Isometric</ViewName>
        </Viewport>
      </Workspace>

      <DocTabs>
        <Steps>
          {["M2 1v8M8 1L4 5l4 4z", "M8 1L3 5l5 4z", "M3 1l5 4-5 4z", "M8 1v8M2 1l4 4-4 4z"].map((d, i) => (
            <StepButton key={i} aria-label={["First", "Previous", "Next", "Last"][i]}><Art s={10} v="0 0 10 10"><path d={d} fill="#888" stroke="#888" /></Art></StepButton>
          ))}
        </Steps>
        <DocTab $on $w={57}>Model</DocTab>
        <DocTab $w={68}>3D Views</DocTab>
        <DocTab $w={108}>Motion Study 1</DocTab>
      </DocTabs>
      <StatusBar>
        <StatusText>SOLIDWORKS Education Edition - Instructional Use Only</StatusText>
        <StatusCell $w={8} />
        <StatusCell $w={71}>Editing Part</StatusCell>
        <StatusCell $w={16} />
        <StatusCell $w={126}>MMGS <Art s={6} v="0 0 6 6"><path d="M0 5h6L3 1z" fill="#333" stroke="none" /></Art></StatusCell>
        <StatusIcon>
          <svg width="18" height="16" viewBox="0 0 18 16" fill="none" stroke="#444" strokeLinejoin="round" aria-hidden="true"><path d="M1 4l5-3 11 5v4l-5 5L1 8z" fill="#eee" /><path d="M1 4l11 6 5-4M12 10v5M5 4l3-1 5 3-3 1z" /></svg>
        </StatusIcon>
      </StatusBar>

      <Taskbar>
        <StartButton aria-label="Start"><svg width="16" height="16" viewBox="0 0 16 16" fill="#fff"><path d="M0 2l7-1v7H0zM8 1l8-1v8H8zM0 9h7v6l-7-1zM8 9h8v7l-8-1z" /></svg></StartButton>
        <TaskSearch>
          <svg width="24" height="24" viewBox="0 0 24 24" fill="none" stroke="#fff" strokeWidth="3"><circle cx="12" cy="12" r="9" /></svg>
          <TaskInput aria-label="Type here to search" placeholder="Type here to search" />
          <svg width="14" height="18" viewBox="0 0 14 18" fill="none" stroke="#c6c6d2"><rect x="4.500" y="1.500" width="5" height="11" rx="1" /><path d="M1.500 9v4.500h11V9M7 13.500v3M4 16.500h6" /></svg>
        </TaskSearch>
        <AppButton aria-label="Task view"><svg width="20" height="16" viewBox="0 0 20 16" fill="none" stroke="#fff"><path d="M4.500 1.500h11v13h-11zM3 3.500H.5v9H3M17 3.500h2.500v9H17" /></svg></AppButton>
        <AppButton aria-label="File Explorer"><svg width="22" height="20" viewBox="0 0 22 20"><path d="M0 2h8l2 1h12v15H0z" fill="#ffe391" /><path d="M1 1h8v3H1z" fill="#f3c04a" /><path d="M4 19v-7q0-1 1-1h12q1 0 1 1v7h-4v-4H8v4z" fill="#35aee2" /></svg></AppButton>
        <AppButton $run aria-label="PaintTool"><svg width="24" height="24" viewBox="0 0 24 24"><path d="M0 1h14l10 9v14H0z" fill="#14663a" /><circle cx="14" cy="10" r="10" fill="#8fc93e" /><circle cx="13" cy="10" r="7" fill="#d8f08c" /><path d="M14 0a10 10 0 0 1 10 11l-6-1-5-5z" fill="#e8613c" opacity=".6" /><path d="M13 3v14M6 8l14 5M7 14l12-8" stroke="#f2fbd0" /><path d="M0 12l24 10" stroke="#3a200f" strokeWidth="4" /><path d="M0 10l23 10" stroke="#e0ad5d" /></svg></AppButton>
        <AppButton $run aria-label="Chrome"><svg width="22" height="22" viewBox="0 0 22 22"><circle cx="11" cy="11" r="11" fill="#fbc52d" /><path d="M11 11L1.500 5.500A11 11 0 0 1 20.500 5.500H11z" fill="#de4b3b" /><path d="M1.500 5.500A11 11 0 0 0 10 22l5-9-4-2z" fill="#1c9a58" /><circle cx="11" cy="11" r="5" fill="#fff" /><circle cx="11" cy="11" r="4" fill="#4a85ee" /></svg></AppButton>
        <AppButton $run aria-label="Sticky Notes"><svg width="18" height="18" viewBox="0 0 18 18"><path d="M0 0h18v9H9v9H0z" fill="#fff" /><path d="M10 18l8-8v8z" fill="#fff" /></svg></AppButton>
        <AppButton $on aria-label="SOLIDWORKS 2017">
          <svg width="26" height="26" viewBox="0 0 26 26"><path d="M2 5l12-4 10 3v14l-12 6-10-5z" fill="#b51217" stroke="#222" /><path d="M2 5l12-4 10 3-11 4z" fill="#ee3b35" />
            <text x="4" y="16" fill="#fff" fontFamily="Lato" fontWeight="900" fontSize="11">S</text><text x="13" y="16" fill="#fff" fontFamily="Lato" fontWeight="900" fontSize="10">W</text>
            <text x="8" y="24" fill="#fff" stroke="#222" strokeWidth="2" paintOrder="stroke" fontFamily="Lato" fontWeight="900" fontSize="8">2017</text></svg>
        </AppButton>
        <Tray>
          <TrayButton $w={38} aria-label="People"><svg width="16" height="18" viewBox="0 0 16 18" fill="none" stroke="#fff"><circle cx="5" cy="8" r="2.500" /><path d="M1 16c0-6 8-6 8 0" /><circle cx="11" cy="4" r="2.500" /><path d="M8 8c3-2 6 0 7 4" /></svg></TrayButton>
          <TrayButton $w={32} aria-label="Hidden icons"><svg width="14" height="8" viewBox="0 0 14 8" fill="none" stroke="#fff"><path d="M1 7l6-6 6 6" /></svg></TrayButton>
          <TrayButton $w={20} aria-label="Battery"><svg width="18" height="12" viewBox="0 0 18 12" fill="none" stroke="#fff"><path d="M7 3.500h8.500v7H4.500M16 5.500h1.500v3M.5 3.500h5v3h-5zM1.500 1v2M4.500 1v2M3.500 6v5" /></svg></TrayButton>
          <TrayButton $w={28} aria-label="Network"><svg width="14" height="14" viewBox="0 0 14 14" fill="none" stroke="#fff"><path d="M1 12C2 6 7 2 13 1M4 12c1-4 5-7 9-7M7 12c1-2 3-4 6-4M10 12c1-1 1-1 3-1" /></svg></TrayButton>
          <TrayButton $w={20} aria-label="Volume"><svg width="16" height="14" viewBox="0 0 16 14" fill="none" stroke="#fff"><path d="M1 5h3l4-4v12L4 9H1zM11 5l4 4M15 5l-4 4" /></svg></TrayButton>
          <TrayButton $w={30} aria-label="Pen"><svg width="18" height="16" viewBox="0 0 18 16" fill="none" stroke="#fff"><path d="M6 12l6-11 3 1-6 11-3 1zM5 7c-3 1-5 4-3 7 2 1 5 0 7-1M12 9c3-2 5 0 3 2s-4 1-4 0" /></svg></TrayButton>
          <Clock><span>1:04 PM</span><span>4/25/2018</span></Clock>
          <NoticeButton aria-label="Notifications">
            <svg width="17" height="15" viewBox="0 0 17 15"><path d="M0 0h17v12H9l-4 3v-3H0z" fill="#fff" /><path d="M3 3.500h11M3 6.500h11M3 9.500h7" stroke="#33304f" /></svg>
            <Badge>5</Badge>
          </NoticeButton>
          <ShowDesktop aria-label="Show desktop" />
        </Tray>
      </Taskbar>
    </Page>
  );
}
